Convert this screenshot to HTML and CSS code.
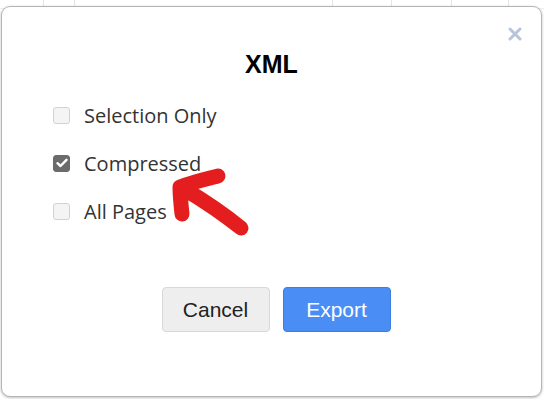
FILE: index.html
```html
<!DOCTYPE html>
<html lang="en">

<head>
  <meta charset="UTF-8">
  <meta name="viewport" content="width=device-width, initial-scale=1.0">
  <title>Export XML</title>
  <link rel="stylesheet" href="styles.css">
</head>

<body>
  <div class="toolbar">
    <span class="cell c1"></span>
    <span class="cell c2"></span>
    <span class="cell c3"></span>
    <span class="cell c4"></span>
    <span class="cell c5"></span>
    <span class="cell c6"></span>
  </div>

  <div class="dialog">
    <button class="close" title="Close">
      <svg width="14" height="14" viewBox="0 0 14 14">
        <path d="M2 2 L12 12 M12 2 L2 12" stroke="#b7c4d9" stroke-width="3" stroke-linecap="round" />
      </svg>
    </button>

    <h2 class="title">XML</h2>

    <div class="options">
      <label class="option">
        <span class="box"></span>
        <span>Selection Only</span>
      </label>
      <label class="option">
        <span class="box checked">
          <svg width="12" height="10" viewBox="0 0 12 10">
            <path d="M1.5 5.2 L4.5 8 L10.5 1.8" fill="none" stroke="#fff" stroke-width="2.4" stroke-linecap="round" stroke-linejoin="round" />
          </svg>
        </span>
        <span>Compressed</span>
      </label>
      <label class="option">
        <span class="box"></span>
        <span>All Pages</span>
      </label>
    </div>

    <div class="buttons">
      <button class="btn cancel">Cancel</button>
      <button class="btn export">Export</button>
    </div>

    <!-- hand drawn annotation arrow -->
    <svg class="scribble" width="544" height="399" viewBox="0 0 544 399">
      <path d="M241 228 C 226 216, 206 202, 186 190 M218 176 C 206 179, 193 182, 180 187 C 180 195, 181 205, 182 214"
        fill="none" stroke="#e41e1e" stroke-width="15" stroke-linecap="round" stroke-linejoin="round" />
    </svg>
  </div>
</body>

</html>
```

FILE: styles.css
```css
body {
  margin: 0;
  height: 399px;
  overflow: hidden;
  background: #fff;
  font-family: "Open Sans", "Noto Sans", sans-serif;
}

.toolbar {
  display: flex;
  height: 8px;
  border-bottom: 1px solid #eee;
}

.cell {
  border-right: 1px solid #e4e4e4;
}

.c1 { width: 43px; }
.c2 { width: 30px; }
.c3 { width: 257px; }
.c4 { width: 58px; }
.c5 { width: 59px; }
.c6 { width: 56px; }

.dialog {
  position: absolute;
  left: 1px;
  top: 6px;
  width: 541px;
  height: 391px;
  box-sizing: border-box;
  background: #fff;
  border: 1px solid #b5b5b5;
  border-radius: 9px;
  box-shadow: 0 1px 3px rgba(0, 0, 0, 0.25);
  display: flex;
  flex-direction: column;
  padding: 0 0 0 51px;
}

.close {
  position: absolute;
  top: 20px;
  right: 19px;
  border: 0;
  padding: 0;
  background: none;
  cursor: pointer;
}

.title {
  margin: 42px 0 0 -51px;
  text-align: center;
  font-family: "Liberation Sans", Arial, sans-serif;
  font-size: 25px;
  line-height: 30px;
  font-weight: bold;
  color: #000;
}

.options {
  display: flex;
  flex-direction: column;
  gap: 20px;
  margin-top: 22px;
}

.option {
  display: flex;
  align-items: center;
  gap: 14px;
  height: 28px;
  font-size: 20px;
  color: #333;
}

.box {
  width: 15px;
  height: 15px;
  border: 1px solid #d2d2d2;
  border-radius: 3px;
  background: #f4f4f4;
  display: flex;
  align-items: center;
  justify-content: center;
}

.box.checked {
  background: #6b6b6b;
  border-color: #6b6b6b;
}

.buttons {
  display: flex;
  justify-content: center;
  gap: 13px;
  margin: 62px 0 0 -42px;
}

.btn {
  height: 45px;
  border-radius: 4px;
  font-family: "Liberation Sans", Arial, sans-serif;
  font-size: 21px;
  padding: 0;
}

.cancel {
  width: 108px;
  background: #eee;
  border: 1px solid #d8d8d8;
  color: #222;
}

.export {
  width: 108px;
  background: #4a8ef5;
  border: 1px solid #3b7de0;
  color: #fff;
}

.scribble {
  position: absolute;
  left: -2px;
  top: -7px;
  pointer-events: none;
}
```
